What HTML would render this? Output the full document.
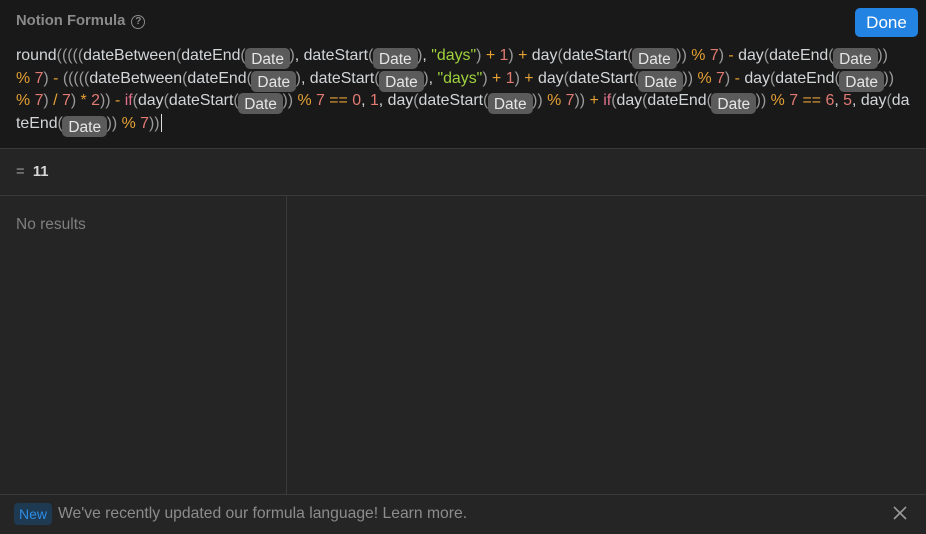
<!DOCTYPE html>
<html><head><meta charset="utf-8"><style>
html,body{margin:0;padding:0;width:926px;height:533px;overflow:hidden;background:#191919;font-family:"Liberation Sans",sans-serif;}
.top{position:absolute;left:0;top:0;width:926px;height:148px;background:#191919;}
.title{position:absolute;left:16px;top:13px;font-size:14.8px;color:#8a8a8a;font-weight:bold;}
.q{display:inline-block;width:12px;height:12px;border:1.5px solid #8a8a8a;border-radius:50%;font-size:10px;line-height:12px;text-align:center;vertical-align:1px;margin-left:6px;font-weight:bold;}
.done{position:absolute;left:855px;top:8px;width:63px;height:29px;background:#2383e2;border-radius:5px;color:#fff;font-size:17px;line-height:29px;text-align:center;}
.code{position:absolute;left:16px;top:45px;font-size:15.9px;line-height:22.5px;color:#d3d6d9;white-space:nowrap;}
.code div{height:22.5px;}
.p{color:#9a9a9a}.o{color:#e5a033}.n{color:#e07a72}.s{color:#9fd23d}.k{color:#e0708a}
.d{display:inline-block;background:#5b5b5b;border-radius:5px;padding:0 6px;height:21px;line-height:24px;color:#e6e6e6;font-size:15.5px;margin:0 -0.5px;vertical-align:-4px;}
.cur{display:inline-block;width:1px;height:18px;background:#ddd;vertical-align:-4px;margin-left:1px;}
.bottom{position:absolute;left:0;top:148px;width:926px;height:385px;background:#252525;border-top:1px solid #3a3a3a;}
.res{position:absolute;left:16px;top:15px;font-size:14.8px;color:#d8d8d8;font-weight:bold;}
.hr{position:absolute;left:0;top:46px;width:926px;height:1px;background:#3a3a3a;}
.vr{position:absolute;left:286px;top:47px;width:1px;height:298px;background:#3a3a3a;}
.nores{position:absolute;left:16px;top:67px;font-size:15.5px;color:#7f7f7f;}
.hr2{position:absolute;left:0;top:345px;width:926px;height:1px;background:#3a3a3a;}
.new{position:absolute;left:14px;top:354px;height:22px;padding:0 5px;background:#1e3a52;border-radius:4px;color:#2f8de4;font-size:14px;line-height:22px;}
.msg{position:absolute;left:58px;top:356px;font-size:15.7px;color:#8c8c8c;}
.x{position:absolute;left:890px;top:354px;width:20px;height:20px;}
</style></head><body>
<div class="top">
<div class="title">Notion Formula<span class="q">?</span></div>
<div class="done">Done</div>
<div class="code">
<div>round<span class="p">(((((</span>dateBetween<span class="p">(</span>dateEnd<span class="p">(</span><span class="d">Date</span><span class="p">)</span>, dateStart<span class="p">(</span><span class="d">Date</span><span class="p">)</span>, <span class="s">"days"</span><span class="p">)</span> <span class="o">+</span> <span class="n">1</span><span class="p">)</span> <span class="o">+</span> day<span class="p">(</span>dateStart<span class="p">(</span><span class="d">Date</span><span class="p">))</span> <span class="o">%</span> <span class="n">7</span><span class="p">)</span> <span class="o">-</span> day<span class="p">(</span>dateEnd<span class="p">(</span><span class="d">Date</span><span class="p">))</span></div>
<div><span class="o">%</span> <span class="n">7</span><span class="p">)</span> <span class="o">-</span> <span class="p">(((((</span>dateBetween<span class="p">(</span>dateEnd<span class="p">(</span><span class="d">Date</span><span class="p">)</span>, dateStart<span class="p">(</span><span class="d">Date</span><span class="p">)</span>, <span class="s">"days"</span><span class="p">)</span> <span class="o">+</span> <span class="n">1</span><span class="p">)</span> <span class="o">+</span> day<span class="p">(</span>dateStart<span class="p">(</span><span class="d">Date</span><span class="p">))</span> <span class="o">%</span> <span class="n">7</span><span class="p">)</span> <span class="o">-</span> day<span class="p">(</span>dateEnd<span class="p">(</span><span class="d">Date</span><span class="p">))</span></div>
<div><span class="o">%</span> <span class="n">7</span><span class="p">)</span> <span class="o">/</span> <span class="n">7</span><span class="p">)</span> <span class="o">*</span> <span class="n">2</span><span class="p">))</span> <span class="o">-</span> <span class="k">if</span><span class="p">(</span>day<span class="p">(</span>dateStart<span class="p">(</span><span class="d">Date</span><span class="p">))</span> <span class="o">%</span> <span class="n">7</span> <span class="o">==</span> <span class="n">0</span>, <span class="n">1</span>, day<span class="p">(</span>dateStart<span class="p">(</span><span class="d">Date</span><span class="p">))</span> <span class="o">%</span> <span class="n">7</span><span class="p">))</span> <span class="o">+</span> <span class="k">if</span><span class="p">(</span>day<span class="p">(</span>dateEnd<span class="p">(</span><span class="d">Date</span><span class="p">))</span> <span class="o">%</span> <span class="n">7</span> <span class="o">==</span> <span class="n">6</span>, <span class="n">5</span>, day<span class="p">(</span>da</div>
<div>teEnd<span class="p">(</span><span class="d">Date</span><span class="p">))</span> <span class="o">%</span> <span class="n">7</span><span class="p">))</span><span class="cur"></span></div>
</div>
</div>
<div class="bottom">
<div class="res"><span style="color:#9a9a9a;font-weight:normal">=</span>&nbsp; 11</div>
<div class="hr"></div>
<div class="vr"></div>
<div class="nores">No results</div>
<div class="hr2"></div>
<div class="new">New</div>
<div class="msg">We've recently updated our formula language! Learn more.</div>
<svg class="x" viewBox="0 0 20 20"><path d="M4 4L16 16M16 4L4 16" stroke="#9a9a9a" stroke-width="1.6" fill="none"/></svg>
</div>
</body></html>
